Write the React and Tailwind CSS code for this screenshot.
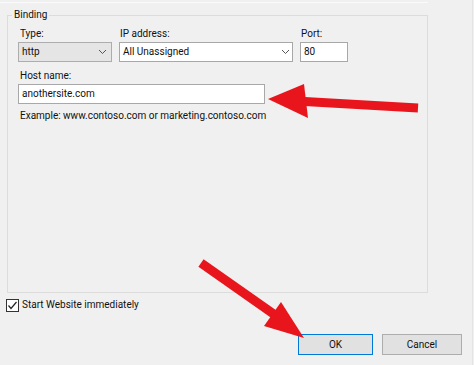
import { useState } from 'react'

function Chevron() {
  return (
    <svg width="9" height="6" viewBox="0 0 9 6" className="shrink-0">
      <polyline points="1,1 4.5,4.5 8,1" fill="none" stroke="#555" strokeWidth="1" />
    </svg>
  )
}

function Arrows() {
  return (
    <svg className="absolute inset-0 pointer-events-none" width="474" height="365" viewBox="0 0 474 365">
      {/* host name arrow */}
      <line x1="296" y1="101" x2="418" y2="108" stroke="#e8161c" strokeWidth="9" />
      <polygon points="268,99 304,84 308,118" fill="#e8161c" />
      {/* ok button arrow */}
      <line x1="201" y1="263" x2="285" y2="322" stroke="#e8161c" strokeWidth="9" />
      <polygon points="304,338 264,326 281,302" fill="#e8161c" />
    </svg>
  )
}

export default function App() {
  const [checked, setChecked] = useState(true)

  return (
    <div
      className="relative w-[474px] h-[365px] overflow-hidden bg-[#f0f0f0] text-[10px] leading-[16px] text-[#111]"
      style={{ fontFamily: '"Segoe UI", Roboto, "Noto Sans", sans-serif' }}
    >
      <div className="absolute left-0 top-[2px] w-[428px] border-t border-[#fafafa]" />
      <div className="absolute right-[1px] top-0 bottom-0 border-r border-[#e4e4e4]" />

      <fieldset className="ml-[7px] mt-[7px] w-[421px] h-[286px] border border-[#dcdcdc] px-[10px]">
        <legend className="ml-[-6px] px-[2px]">Binding</legend>

        {/* type / ip / port */}
        <div className="flex gap-[7px] mt-[3px]">
          <div className="flex flex-col w-[94px]">
            <span className="pl-[2px]">Type:</span>
            <div className="h-[20px] flex items-center justify-between bg-[#e5e5e5] border border-[#adadad] pl-[3px] pr-[4px]">
              <span>http</span>
              <Chevron />
            </div>
          </div>
          <div className="flex flex-col w-[174px]">
            <span className="pl-[1px]">IP address:</span>
            <div className="h-[20px] flex items-center justify-between bg-white border border-[#a8a8a8] pl-[3px] pr-[2px]">
              <span>All Unassigned</span>
              <Chevron />
            </div>
          </div>
          <div className="flex flex-col w-[48px]">
            <span className="pl-[1px]">Port:</span>
            <div className="h-[20px] flex items-center bg-white border border-[#a8a8a8] pl-[3px]">
              <span>80</span>
            </div>
          </div>
        </div>

        {/* host name */}
        <div className="flex flex-col mt-[6px] w-[247px]">
          <span className="pl-[2px]">Host name:</span>
          <div className="h-[20px] flex items-center bg-white border border-[#a8a8a8] pl-[3px]">
            <span>anothersite.com</span>
          </div>
        </div>
        <p className="mt-[4px] pl-[2px]">Example: www.contoso.com or marketing.contoso.com</p>
      </fieldset>

      {/* start website */}
      <label className="flex items-center gap-[3px] ml-[6px] mt-[4px] w-fit">
        <span
          onClick={() => setChecked(!checked)}
          className="w-[13px] h-[13px] border border-[#333] bg-white flex items-center justify-center"
        >
          {checked && (
            <svg width="11" height="11" viewBox="0 0 11 11">
              <polyline points="1.5,5.5 4,8.5 9.5,2" fill="none" stroke="#222" strokeWidth="1.2" />
            </svg>
          )}
        </span>
        <span>Start Website immediately</span>
      </label>

      {/* buttons */}
      <div className="flex justify-end gap-[9px] mt-[21px] pr-[12px]">
        <button className="w-[75px] h-[21px] bg-[#e1e1e1] border border-[#0078d7] leading-[16px]">OK</button>
        <button className="w-[80px] h-[21px] bg-[#e1e1e1] border border-[#adadad] leading-[16px]">Cancel</button>
      </div>

      <Arrows />
    </div>
  )
}
